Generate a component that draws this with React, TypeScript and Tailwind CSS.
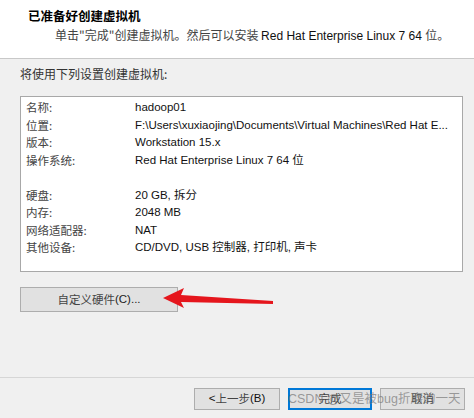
import React from "react";

const cjk = '"Noto Sans CJK SC", sans-serif';
const mix = '"Liberation Sans", "Noto Sans CJK SC", sans-serif';

const rows: [string, string][] = [
  ["名称:", "hadoop01"],
  ["位置:", "F:\\Users\\xuxiaojing\\Documents\\Virtual Machines\\Red Hat E..."],
  ["版本:", "Workstation 15.x"],
  ["操作系统:", "Red Hat Enterprise Linux 7 64 位"],
  ["", ""],
  ["硬盘:", "20 GB, 拆分"],
  ["内存:", "2048 MB"],
  ["网络适配器:", "NAT"],
  ["其他设备:", "CD/DVD, USB 控制器, 打印机, 声卡"],
];

export default function App() {
  return (
    <div className="relative w-[474px] h-[418px] flex flex-col overflow-hidden bg-[#f0f0f0]" style={{ fontFamily: mix }}>
      {/* Header */}
      <div className="h-[59px] bg-white border-b border-[#c8c8c8] pl-[28px] pt-[7px]">
        <div className="text-[12.5px] leading-[18px] font-bold text-black" style={{ fontFamily: cjk }}>
          已准备好创建虚拟机
        </div>
        <div className="pl-[27px] mt-[1px] text-[12px] leading-[18px] text-[#111]">
          <span className="text-[#444]" style={{ fontFamily: cjk }}>单击"完成"创建虚拟机。然后可以安装 </span>
          <span>Red Hat Enterprise Linux 7 64 </span>
          <span className="text-[#444]" style={{ fontFamily: cjk }}>位。</span>
        </div>
      </div>

      {/* Body */}
      <div className="flex-1 flex flex-col px-[20px] pt-[6px]">
        <div className="text-[12px] leading-[18px] text-[#333]" style={{ fontFamily: cjk }}>
          将使用下列设置创建虚拟机:
        </div>
        <div className="mt-[13px] w-[443px] h-[176px] bg-white border border-[#a8a8a8] pt-[2px] pl-[5px]">
          {rows.map(([k, v], i) => (
            <div key={i} className="flex h-[17.5px] items-center text-[11.5px] text-[#111]">
              <div className="w-[109px] text-[#444]" style={{ fontFamily: cjk }}>{k}</div>
              <div className="whitespace-nowrap">{v}</div>
            </div>
          ))}
        </div>
        <button className="mt-[15px] w-[158px] h-[25px] bg-[#e1e1e1] border border-[#adadad] text-[11.5px] text-[#222] flex items-center justify-center">
          <span className="text-[#444]" style={{ fontFamily: cjk }}>自定义硬件</span>
          <span>(C)...</span>
        </button>
      </div>

      {/* Footer */}
      <div className="h-[41px] border-t border-[#d6d6d6] flex justify-end items-start pt-[10px] pr-[9px] gap-[8px] text-[11.5px] text-[#111]">
        <button className="w-[86px] h-[22px] bg-[#e1e1e1] border border-[#adadad] flex items-center justify-center">
          <span>&lt; </span>
          <span className="text-[#444]" style={{ fontFamily: cjk }}>上一步</span>
          <span>(B)</span>
        </button>
        <button className="w-[84px] h-[22px] bg-[#e1e1e1] border-2 border-[#0078d7] flex items-center justify-center">
          <span className="text-[#444]" style={{ fontFamily: cjk }}>完成</span>
        </button>
        <button className="w-[85px] h-[22px] bg-[#e1e1e1] border border-[#adadad] flex items-center justify-center">
          <span className="text-[#444]" style={{ fontFamily: cjk }}>取消</span>
        </button>
      </div>

      {/* Red arrow annotation */}
      <svg className="absolute left-0 top-0" width="474" height="418" viewBox="0 0 474 418">
        <polygon
          points="163,298 184,288 181,295 273,301 273,304 181,302 184,308"
          fill="#e5161d"
        />
      </svg>

      {/* Watermark */}
      <div
        className="absolute left-[288px] top-[391px] text-[12.5px] leading-[17px] text-[#777]/70 whitespace-nowrap"
        style={{ fontFamily: mix }}
      >
        CSDN @又是被bug折磨的一天
      </div>
    </div>
  );
}
